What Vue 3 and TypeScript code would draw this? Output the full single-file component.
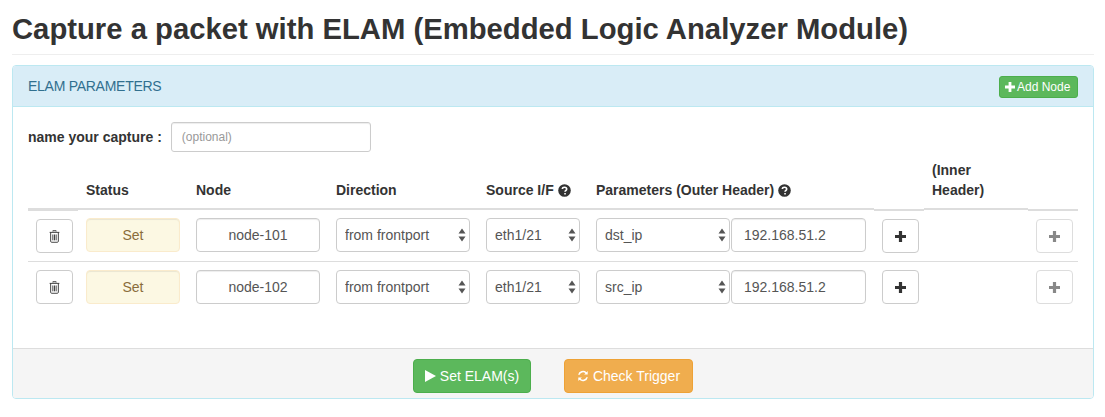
<script setup lang="ts">
interface Row {
  node: string
  field: string
}
const rows: Row[] = [
  { node: 'node-101', field: 'dst_ip' },
  { node: 'node-102', field: 'src_ip' },
]
</script>

<template>
  <div class="page">
    <h1 class="title">Capture a packet with ELAM (Embedded Logic Analyzer Module)</h1>
    <section class="panel">
      <header class="panel-head">
        <span class="panel-title">ELAM PARAMETERS</span>
        <button class="btn-add" type="button">
          <svg class="ico-plus-s" viewBox="0 0 10 10"><path d="M3.600 0h2.800v3.600H10v2.800H6.400V10H3.600V6.400H0V3.600h3.600z" /></svg>
          Add Node
        </button>
      </header>
      <div class="panel-body">
        <div class="name-row">
          <label class="name-label">name your capture :</label>
          <input class="name-input" placeholder="(optional)" />
        </div>
        <table class="grid">
          <colgroup>
            <col style="width: 50px" /><col style="width: 110px" /><col style="width: 140px" />
            <col style="width: 150px" /><col style="width: 110px" /><col style="width: 286px" />
            <col style="width: 50px" /><col style="width: 104px" /><col style="width: 50px" />
          </colgroup>
          <thead>
            <tr>
              <th class="thick"></th>
              <th>Status</th>
              <th>Node</th>
              <th>Direction</th>
              <th>Source I/F <svg class="help" viewBox="0 0 12 12"><circle cx="6" cy="6" r="5.800" /><path class="q" d="M4 4.600C4.100 3.500 4.900 3 6 3s2 .7 2 1.700c0 1.500-1.500 1.400-1.500 2.500M6.500 8.300v1.300" /></svg></th>
              <th>Parameters (Outer Header) <svg class="help" viewBox="0 0 12 12"><circle cx="6" cy="6" r="5.800" /><path class="q" d="M4 4.600C4.100 3.500 4.900 3 6 3s2 .7 2 1.700c0 1.500-1.500 1.400-1.500 2.500M6.500 8.300v1.300" /></svg></th>
              <th class="low"></th>
              <th>(Inner Header)</th>
              <th class="low"></th>
            </tr>
          </thead>
          <tbody>
            <tr v-for="row in rows" :key="row.node">
              <td class="btn-cell">
                <button class="btn" type="button" aria-label="Delete">
                  <svg class="ico-trash" viewBox="0 0 12 14"><path d="M4.200 1.500V.7h3.600v.8M.7 2.500h10.600M1.800 2.500v9.700c0 .6.400 1.100 1 1.100h6.400c.6 0 1-.5 1-1.100V2.500M4.200 4.800v6.400M6 4.800v6.400M7.800 4.800v6.400" /></svg>
                </button>
              </td>
              <td><input class="field status" value="Set" readonly /></td>
              <td><input class="field node" :value="row.node" /></td>
              <td>
                <div class="sel w134">
                  <select><option>from frontport</option></select>
                  <svg class="arrows" viewBox="0 0 8 13"><path d="M4 0l3.500 5H.5zM4 13L.5 8h7z" /></svg>
                </div>
              </td>
              <td>
                <div class="sel w94">
                  <select><option>eth1/21</option></select>
                  <svg class="arrows" viewBox="0 0 8 13"><path d="M4 0l3.500 5H.5zM4 13L.5 8h7z" /></svg>
                </div>
              </td>
              <td>
                <div class="pair">
                  <div class="sel w134">
                    <select><option>{{ row.field }}</option></select>
                    <svg class="arrows" viewBox="0 0 8 13"><path d="M4 0l3.500 5H.5zM4 13L.5 8h7z" /></svg>
                  </div>
                  <input class="field ip" value="192.168.51.2" />
                </div>
              </td>
              <td class="btn-cell">
                <button class="btn" type="button" aria-label="Add outer">
                  <svg class="ico-plus" viewBox="0 0 11 11"><path d="M3.900 0h3.200v3.900H11v3.200H7.100V11H3.900V7.100H0V3.900h3.900z" /></svg>
                </button>
              </td>
              <td></td>
              <td class="btn-cell">
                <button class="btn muted" type="button" aria-label="Add inner">
                  <svg class="ico-plus" viewBox="0 0 11 11"><path d="M3.900 0h3.200v3.900H11v3.200H7.100V11H3.900V7.100H0V3.900h3.900z" /></svg>
                </button>
              </td>
            </tr>
          </tbody>
        </table>
      </div>
      <footer class="panel-foot">
        <button class="btn-action green" type="button">
          <svg class="ico-play" viewBox="0 0 11 12"><path d="M0 0l11 6-11 6z" /></svg>
          Set ELAM(s)
        </button>
        <button class="btn-action orange" type="button">
          <svg class="ico-refresh" viewBox="0 0 12 12"><path d="M10.700 1v3.600H7.100l1.300-1.300A3.500 3.500 0 0 0 2.700 4.700H1.100A5 5 0 0 1 9.500 2.200zM1.300 11V7.400h3.600L3.600 8.700a3.500 3.500 0 0 0 5.700-1.400h1.600a5 5 0 0 1-8.400 2.500z" /></svg>
          Check Trigger
        </button>
      </footer>
    </section>
  </div>
</template>

<style scoped>
.page {
  box-sizing: border-box;
  width: 1105px;
  padding: 0 11px 0 12px;
  font-family: "Liberation Sans", Arial, sans-serif;
  font-size: 14px;
  line-height: 20px;
  color: #333;
}
.title {
  margin: 0 0 10px;
  padding: 12px 0 7px;
  height: 35px;
  box-sizing: content-box;
  border-bottom: 1px solid #eee;
  font-size: 29.250px;
  line-height: 34px;
  font-weight: 700;
  color: #333;
  white-space: nowrap;
}
.panel {
  border: 1px solid #bce8f1;
  border-radius: 4px;
  background: #fff;
  overflow: hidden;
}
.panel-head {
  display: flex;
  align-items: flex-start;
  justify-content: space-between;
  height: 30px;
  padding: 10px 15px 0;
  background: #d9edf7;
  border-bottom: 1px solid #bce8f1;
  color: #31708f;
}
.panel-title {
  letter-spacing: -0.27px;
}
.btn-add {
  display: flex;
  align-items: center;
  gap: 2px;
  width: 79px;
  height: 22px;
  padding: 0 0 0 5px;
  border: 1px solid #4cae4c;
  border-radius: 3px;
  background: #5cb85c;
  color: #fff;
  font: 12px/18px "Liberation Sans", Arial, sans-serif;
}
.ico-plus-s {
  width: 10px;
  height: 10px;
  fill: #fff;
}
.panel-body {
  padding: 15px 15px 16px;
}
.name-row {
  display: flex;
  align-items: center;
  gap: 9px;
  height: 30px;
}
.name-label {
  font-weight: 700;
}
.name-input {
  box-sizing: border-box;
  width: 200px;
  height: 30px;
  padding: 5px 10px;
  border: 1px solid #ccc;
  border-radius: 3px;
  font: 12px/18px "Liberation Sans", Arial, sans-serif;
  box-shadow: inset 0 1px 1px rgba(0, 0, 0, 0.075);
}
.name-input::placeholder {
  color: #999;
  opacity: 1;
}
.grid {
  width: 1050px;
  table-layout: fixed;
  border-collapse: separate;
  border-spacing: 0;
  margin-bottom: 20px;
}
th {
  box-sizing: border-box;
  padding: 8px 8px 10px;
  vertical-align: bottom;
  text-align: left;
  font-weight: 700;
  border-bottom: 1px solid #fff;
  box-shadow: inset 0 -2px 0 #ddd;
}
th.low {
  border-bottom: 2px solid #ddd;
  box-shadow: none;
}
th.thick {
  border-bottom: 3px solid #ddd;
  box-shadow: none;
}
td {
  padding: 8px;
  vertical-align: top;
  border-top: 1px solid #ddd;
}
tbody tr:first-child td {
  border-top: 0;
  padding: 7px 8px 9px;
}
tbody tr:first-child td.btn-cell {
  padding: 8px;
}
.help {
  width: 13px;
  height: 13px;
  vertical-align: -2px;
}
.help circle {
  fill: #333;
}
.help .q {
  fill: none;
  stroke: #fff;
  stroke-width: 1.500;
}
.btn {
  display: flex;
  align-items: center;
  justify-content: center;
  box-sizing: border-box;
  width: 37px;
  height: 34px;
  padding: 0;
  border: 1px solid #ccc;
  border-radius: 4px;
  background: #fff;
  color: #333;
}
.btn.muted {
  border-color: #ddd;
  color: #777;
}
.ico-trash {
  width: 11px;
  height: 13px;
  fill: none;
  stroke: #333;
  stroke-width: 1;
}
.ico-plus {
  width: 11px;
  height: 11px;
  fill: currentColor;
}
.btn.muted .ico-plus {
  fill: #888;
}
.field {
  box-sizing: border-box;
  display: block;
  height: 34px;
  padding: 6px 12px;
  border: 1px solid #ccc;
  border-radius: 4px;
  background: #fff;
  color: #555;
  font: 14px/20px "Liberation Sans", Arial, sans-serif;
  box-shadow: inset 0 1px 1px rgba(0, 0, 0, 0.075);
}
.status {
  width: 94px;
  text-align: center;
  background: #fcf8e3;
  border-color: #faebcc;
  color: #8a6d3b;
}
.node {
  width: 124px;
  text-align: center;
}
.ip {
  width: 135px;
}
.sel {
  position: relative;
  height: 34px;
}
.sel.w134 {
  width: 134px;
}
.sel.w94 {
  width: 94px;
}
.sel select {
  box-sizing: border-box;
  width: 100%;
  height: 34px;
  padding: 6px 8px;
  border: 1px solid #ccc;
  border-radius: 4px;
  background: #fff;
  color: #555;
  font: 14px/20px "Liberation Sans", Arial, sans-serif;
  appearance: none;
  -webkit-appearance: none;
}
.arrows {
  position: absolute;
  right: 4px;
  top: 10px;
  width: 8px;
  height: 14px;
  fill: #555;
  pointer-events: none;
}
.pair {
  display: flex;
  gap: 1px;
}
.panel-foot {
  display: flex;
  justify-content: center;
  gap: 33px;
  height: 39px;
  padding: 10px 15px 0;
  background: #f5f5f5;
  border-top: 1px solid #ddd;
}
.btn-action {
  display: flex;
  align-items: center;
  justify-content: center;
  gap: 4px;
  box-sizing: border-box;
  height: 34px;
  border-radius: 4px;
  color: #fff;
  font: 14px/20px "Liberation Sans", Arial, sans-serif;
  padding: 0;
}
.green {
  width: 118px;
  background: #5cb85c;
  border: 1px solid #4cae4c;
}
.orange {
  width: 129px;
  background: #f0ad4e;
  border: 1px solid #eea236;
}
.ico-play {
  width: 11px;
  height: 12px;
  fill: #fff;
}
.ico-refresh {
  width: 12px;
  height: 12px;
  fill: #fff;
}
</style>
